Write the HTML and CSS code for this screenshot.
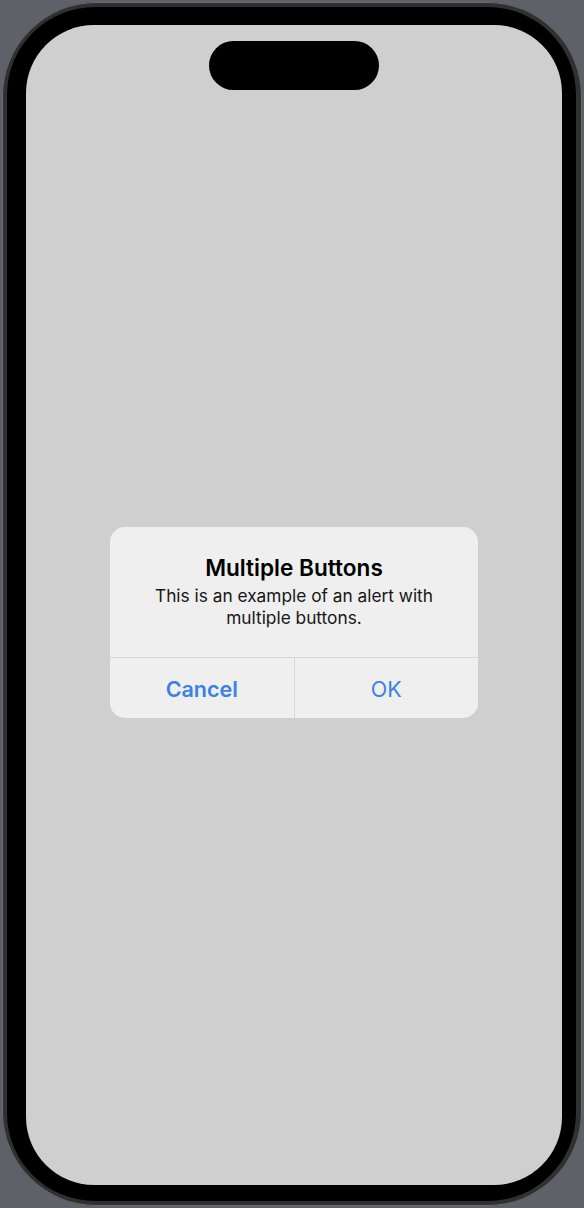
FILE: index.html
```html
<!DOCTYPE html>
<html>
<head>
<meta charset="utf-8">
<link rel="stylesheet" href="styles.css">
</head>
<body>
<div class="phone">
  <div class="bezel">
    <div class="screen">
      <div class="island"></div>
      <div class="alert">
        <div class="alert-body">
          <div class="alert-title">Multiple Buttons</div>
          <div class="alert-message">This is an example of an alert with multiple buttons.</div>
        </div>
        <div class="alert-actions">
          <div class="action action-cancel">Cancel</div>
          <div class="action action-ok">OK</div>
        </div>
      </div>
    </div>
  </div>
</div>
</body>
</html>
```
FILE: styles.css
```css
html, body {
  margin: 0;
  padding: 0;
}
body {
  width: 584px;
  height: 1208px;
  background: #5e6268;
  overflow: hidden;
  font-family: Inter, "Noto Sans", "Liberation Sans", sans-serif;
}
.phone {
  margin: 2px 2px 0 2px;
  width: 580px;
  height: 1204px;
  box-sizing: border-box;
  border-radius: 94px;
  background: #303030;
  padding: 5px 6px 5px 5px;
  box-shadow: inset 0 0 0 1px #6a6d72;
}
.bezel {
  width: 100%;
  height: 100%;
  box-sizing: border-box;
  border-radius: 88px;
  background: #000;
  padding: 18px 14px 15px 19px;
}
.screen {
  width: 536px;
  height: 1160px;
  border-radius: 68px;
  background: #cfcfcf;
  display: flex;
  flex-direction: column;
  align-items: center;
}
.island {
  margin-top: 16px;
  width: 170px;
  height: 49px;
  border-radius: 25px;
  background: #000;
}
.alert {
  margin-top: 437px;
  width: 368px;
  height: 191px;
  border-radius: 15px;
  background: #efefef;
  display: flex;
  flex-direction: column;
  overflow: hidden;
}
.alert-body {
  height: 131px;
  box-sizing: border-box;
  padding: 27px 16px 0 16px;
  text-align: center;
  border-bottom: 1px solid #d7d7d7;
}
.alert-title {
  font-size: 22.6px;
  font-weight: 600;
  color: #000;
  line-height: 28px;
}
.alert-message {
  margin-top: 3px;
  font-size: 17.3px;
  line-height: 22px;
  color: #161616;
  padding: 0 12px;
}
.alert-actions {
  flex: 1;
  display: flex;
}
.action {
  flex: 1;
  display: flex;
  align-items: center;
  justify-content: center;
  font-size: 21.5px;
  color: #3a82e4;
  padding-top: 1px;
}
.action-cancel {
  font-weight: 600;
  border-right: 1px solid #d7d7d7;
}
```
